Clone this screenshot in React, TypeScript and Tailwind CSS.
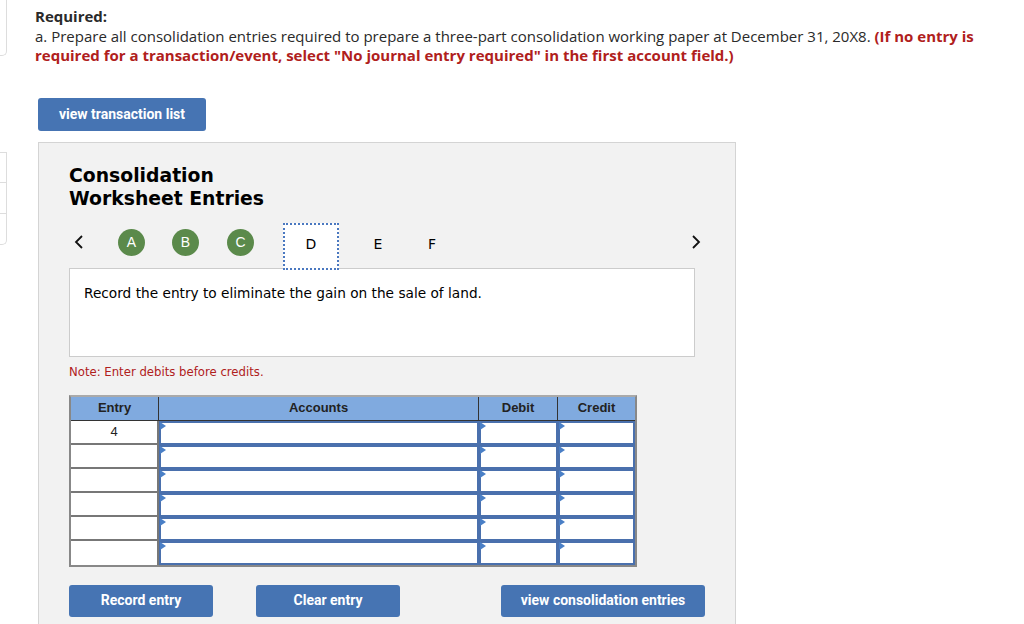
import React from 'react';

const BLUE_BTN = 'bg-[#4674b3] text-white font-bold text-[14px] rounded-[3px] flex items-center justify-center shrink-0';

const Chevron = ({ dir }: { dir: 'left' | 'right' }) => (
  <svg width="10" height="16" viewBox="0 0 10 16" fill="none" stroke="#111" strokeWidth={1.8}>
    {dir === 'left' ? <path d="M8 2 L2 8 L8 14" /> : <path d="M2 2 L8 8 L2 14" />}
  </svg>
);

const Circle = ({ label }: { label: string }) => (
  <div className="w-[27px] h-[27px] rounded-full bg-[#5b8a4b] text-white text-[14px] flex items-center justify-center font-['Liberation_Sans',sans-serif]">
    {label}
  </div>
);

// input cell with the little marker in the corner
const InputCell = ({ width }: { width: string }) => (
  <div className={`relative h-[24px] ${width} border-2 border-[#4a70ad] bg-white`}>
    <div className="absolute -left-[1px] -top-[1px] w-0 h-0 border-y-[4px] border-y-transparent border-l-[6px] border-l-[#4a7fc6]" />
  </div>
);

export default function App() {
  const rows = ['4', '', '', '', '', ''];

  return (
    <div className="w-[1024px] h-[624px] overflow-hidden bg-white flex font-['Open_Sans',sans-serif] text-[#2a2a2a]">
      {/* cut-off sidebar on the left */}
      <div className="w-[7px] shrink-0 flex flex-col">
        <div className="h-[56px] border-r border-b border-[#ddd] rounded-br-[5px]" />
        <div className="mt-[96px] flex flex-col">
          <div className="h-[31px] border-r border-t border-b border-[#ddd]" />
          <div className="h-[31px] border-r border-b border-[#ddd]" />
          <div className="h-[31px] border-r border-b border-[#ddd] rounded-br-[5px]" />
        </div>
      </div>

      <div className="pl-[28px] pt-[7px] flex-1">
        <div className="text-[15px] leading-[19.5px] w-[985px]">
          <div className="font-bold">Required:</div>
          <div>
            a. Prepare all consolidation entries required to prepare a three-part consolidation working paper at December 31, 20X8.{' '}
            <span className="font-bold text-[#b0201c]">
              (If no entry is required for a transaction/event, select "No journal entry required" in the first account field.)
            </span>
          </div>
        </div>

        <button className={`${BLUE_BTN} mt-[32px] w-[168px] h-[33px] ml-[3px] font-['Roboto',sans-serif]`}>
          view transaction list
        </button>

        <div className="mt-[11px] ml-[3px] w-[698px] h-[500px] bg-[#f2f2f2] border border-[#d4d4d4] pl-[30px] pr-[40px] pt-[21px]">
          <h2 className="font-['DejaVu_Sans',sans-serif] font-bold text-[18.8px] leading-[23px] text-black">
            Consolidation
            <br />
            Worksheet Entries
          </h2>

          <div className="mt-[13px] h-[45px] flex items-start font-['DejaVu_Sans',sans-serif] text-[14px] text-black">
            <div className="ml-[5px] mt-[11px]">
              <Chevron dir="left" />
            </div>
            <div className="ml-[34px] mt-[6px]"><Circle label="A" /></div>
            <div className="ml-[27px] mt-[6px]"><Circle label="B" /></div>
            <div className="ml-[28px] mt-[6px]"><Circle label="C" /></div>
            <div className="ml-[29px] relative z-10 w-[56px] h-[47px] bg-white border-2 border-dotted border-[#4a78c0] flex justify-center pt-[9px]">
              D
            </div>
            <div className="ml-[19px] w-[40px] text-center pt-[11px]">E</div>
            <div className="ml-[14px] w-[40px] text-center pt-[11px]">F</div>
            <div className="ml-auto -mr-[6px] mt-[11px]">
              <Chevron dir="right" />
            </div>
          </div>

          <div className="h-[89px] bg-white border border-[#cccccc] pl-[14px] pt-[15px] font-['DejaVu_Sans',sans-serif] text-[13.7px] leading-[18px] text-black">
            Record the entry to eliminate the gain on the sale of land.
          </div>

          <div className="mt-[8px] font-['DejaVu_Sans',sans-serif] text-[11.7px] leading-[14px] text-[#b0201c]">
            Note: Enter debits before credits.
          </div>

          {/* journal table */}
          <div className="mt-[16px] w-[568px] border-2 border-[#888] border-t-[#aaa] font-['Liberation_Sans',sans-serif]">
            <div className="flex h-[24px] bg-[#80aadf] border-b border-[#333] text-[13px] font-bold text-[#222]">
              <div className="w-[88px] flex items-center justify-center border-r border-[#333]">Entry</div>
              <div className="w-[320px] flex items-center justify-center border-r border-[#333]">Accounts</div>
              <div className="w-[79px] flex items-center justify-center border-r border-[#333]">Debit</div>
              <div className="flex-1 flex items-center justify-center">Credit</div>
            </div>
            {rows.map((r, i) => (
              <div key={i} className="flex">
                <div
                  className={`w-[88px] h-[24px] bg-white border-r-2 border-[#777] flex items-center justify-center text-[13px] text-[#222] ${
                    i < rows.length - 1 ? 'border-b-2' : ''
                  }`}
                >
                  {r}
                </div>
                <InputCell width="w-[320px]" />
                <InputCell width="w-[79px]" />
                <InputCell width="flex-1" />
              </div>
            ))}
          </div>

          <div className="mt-[18px] flex font-['Roboto',sans-serif]">
            <button className={`${BLUE_BTN} w-[144px] h-[32px]`}>Record entry</button>
            <button className={`${BLUE_BTN} ml-[43px] w-[144px] h-[32px]`}>Clear entry</button>
            <button className={`${BLUE_BTN} ml-[101px] w-[204px] h-[32px]`}>view consolidation entries</button>
          </div>
        </div>
      </div>
    </div>
  );
}
